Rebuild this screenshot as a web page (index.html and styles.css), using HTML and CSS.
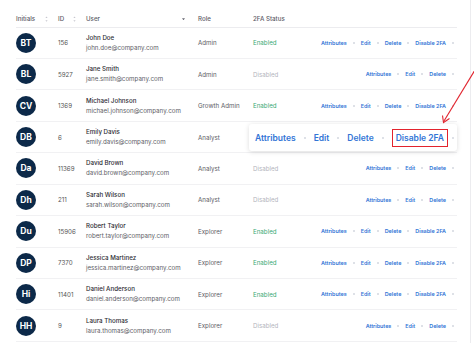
FILE: index.html
```html
<!DOCTYPE html>
<html lang="en">
<head>
	<meta charset="utf-8">
	<title>Users</title>
	<link rel="stylesheet" href="styles.css">
</head>
<body>
	<div class="page">
		<div class="userTable">
			<div class="row head">
				<div class="hcell">Initials <svg class="sortIcon" viewBox="0 0 4 8"><path d="M2 0.5 L3.5 2.5 H0.5Z M2 7.5 L3.5 5.5 H0.5Z"/></svg></div>
				<div class="hcell">ID <svg class="sortIcon" viewBox="0 0 4 8"><path d="M2 0.5 L3.5 2.5 H0.5Z M2 7.5 L3.5 5.5 H0.5Z"/></svg></div>
				<div class="hcell">User <svg class="sortDown" viewBox="0 0 4 3"><path d="M0 0 H4 L2 3Z"/></svg></div>
				<div class="hcell">Role</div>
				<div class="hcell">2FA Status</div>
				<div class="hcell"></div>
			</div>

			<div class="row">
				<div><span class="avatar">BT</span></div>
				<div class="id">156</div>
				<div class="user"><div class="name">John Doe</div><div class="mail">john.doe@company.com</div></div>
				<div class="role">Admin</div>
				<div class="status on">Enabled</div>
				<div class="actions"><a>Attributes</a><i></i><a>Edit</a><i></i><a>Delete</a><i></i><a>Disable 2FA</a><i></i></div>
			</div>
			<div class="row">
				<div><span class="avatar">BL</span></div>
				<div class="id">5927</div>
				<div class="user"><div class="name">Jane Smith</div><div class="mail">jane.smith@company.com</div></div>
				<div class="role">Admin</div>
				<div class="status off">Disabled</div>
				<div class="actions"><a>Attributes</a><i></i><a>Edit</a><i></i><a>Delete</a><i></i></div>
			</div>
			<div class="row">
				<div><span class="avatar">CV</span></div>
				<div class="id">1369</div>
				<div class="user"><div class="name">Michael Johnson</div><div class="mail">michael.johnson@company.com</div></div>
				<div class="role">Growth Admin</div>
				<div class="status on">Enabled</div>
				<div class="actions"><a>Attributes</a><i></i><a>Edit</a><i></i><a>Delete</a><i></i><a>Disable 2FA</a><i></i></div>
			</div>
			<div class="row">
				<div><span class="avatar">DB</span></div>
				<div class="id">6</div>
				<div class="user"><div class="name">Emily Davis</div><div class="mail">emily.davis@company.com</div></div>
				<div class="role">Analyst</div>
				<div class="status"></div>
				<div class="actions"></div>
			</div>
			<div class="row">
				<div><span class="avatar">Da</span></div>
				<div class="id">11369</div>
				<div class="user"><div class="name">David Brown</div><div class="mail">david.brown@company.com</div></div>
				<div class="role">Analyst</div>
				<div class="status off">Disabled</div>
				<div class="actions"><a>Attributes</a><i></i><a>Edit</a><i></i><a>Delete</a><i></i></div>
			</div>
			<div class="row">
				<div><span class="avatar">Dh</span></div>
				<div class="id">211</div>
				<div class="user"><div class="name">Sarah Wilson</div><div class="mail">sarah.wilson@company.com</div></div>
				<div class="role">Analyst</div>
				<div class="status off">Disabled</div>
				<div class="actions"><a>Attributes</a><i></i><a>Edit</a><i></i><a>Delete</a><i></i></div>
			</div>
			<div class="row">
				<div><span class="avatar">Du</span></div>
				<div class="id">15906</div>
				<div class="user"><div class="name">Robert Taylor</div><div class="mail">robert.taylor@company.com</div></div>
				<div class="role">Explorer</div>
				<div class="status on">Enabled</div>
				<div class="actions"><a>Attributes</a><i></i><a>Edit</a><i></i><a>Delete</a><i></i><a>Disable 2FA</a><i></i></div>
			</div>
			<div class="row">
				<div><span class="avatar">DP</span></div>
				<div class="id">7370</div>
				<div class="user"><div class="name">Jessica Martinez</div><div class="mail">jessica.martinez@company.com</div></div>
				<div class="role">Explorer</div>
				<div class="status on">Enabled</div>
				<div class="actions"><a>Attributes</a><i></i><a>Edit</a><i></i><a>Delete</a><i></i><a>Disable 2FA</a><i></i></div>
			</div>
			<div class="row">
				<div><span class="avatar">Hi</span></div>
				<div class="id">11401</div>
				<div class="user"><div class="name">Daniel Anderson</div><div class="mail">daniel.anderson@company.com</div></div>
				<div class="role">Explorer</div>
				<div class="status on">Enabled</div>
				<div class="actions"><a>Attributes</a><i></i><a>Edit</a><i></i><a>Delete</a><i></i><a>Disable 2FA</a><i></i></div>
			</div>
			<div class="row">
				<div><span class="avatar">HH</span></div>
				<div class="id">9</div>
				<div class="user"><div class="name">Laura Thomas</div><div class="mail">laura.thomas@company.com</div></div>
				<div class="role">Explorer</div>
				<div class="status off">Disabled</div>
				<div class="actions"><a>Attributes</a><i></i><a>Edit</a><i></i><a>Delete</a><i></i></div>
			</div>

			<!-- zoomed callout of the row actions -->
			<div class="callout">
				<a>Attributes</a><i></i><a>Edit</a><i></i><a>Delete</a><i></i><a class="marked">Disable 2FA</a><i></i>
			</div>
		</div>
		<div class="edge"></div>
		<svg class="arrow" viewBox="0 0 474 343" width="474" height="343">
			<path d="M475 70 L444 121" />
			<path d="M442.5 115.5 L443.5 122.5 L449.5 118.5" />
		</svg>
	</div>
</body>
</html>
```

FILE: styles.css
```css
*, *:after, *:before {
	box-sizing: border-box;
}
html, body {
	margin: 0;
	background: #fff;
	font-family: Inter, "Noto Sans", sans-serif;
	color: #333;
}
.page {
	position: relative;
	width: 474px;
	height: 343px;
	overflow: hidden;
}
.userTable {
	position: relative;
	width: 441px;
	margin-left: 16px;
	padding-top: 11px;
}
.row {
	display: grid;
	grid-template-columns: 42px 28px 112px 55px 50px 1fr;
	align-items: center;
	height: 31.45px;
	border-bottom: 1px solid #f1f1f3;
	font-size: 6.2px;
	white-space: nowrap;
}
.row.head {
	height: 16.5px;
	border-bottom: 1px solid #ececef;
	color: #5b5b66;
	font-weight: 500;
}
.hcell {
	display: flex;
	align-items: center;
	justify-content: space-between;
	padding-right: 10px;
}
.sortIcon {
	width: 3px;
	height: 6px;
	fill: #c7c7cf;
}
.sortDown {
	width: 3px;
	height: 2.5px;
	fill: #6a6a74;
	margin-right: 3px;
}
.avatar {
	display: flex;
	align-items: center;
	justify-content: center;
	width: 20px;
	height: 20px;
	border-radius: 50%;
	background: #0c2949;
	color: #fff;
	font-size: 8.5px;
	font-weight: 700;
}
.id {
	color: #555;
}
.name {
	color: #2d2d33;
	font-weight: 500;
	line-height: 10px;
}
.mail {
	color: #5c5c66;
	line-height: 10px;
}
.role {
	color: #5c5c66;
}
.status.on {
	color: #3aa874;
}
.status.off {
	color: #b4b4bc;
}
.actions {
	display: flex;
	justify-content: flex-end;
	align-items: center;
	padding-right: 3px;
	font-size: 5.4px;
	font-weight: 600;
}
.actions a, .callout a {
	color: #3275d6;
}
.actions i, .callout i {
	width: 2px;
	height: 2px;
	border-radius: 50%;
	background: #d3d7df;
	margin: 0 6px;
}
.actions i:last-child {
	margin-right: 0;
}
.callout {
	position: absolute;
	left: 233px;
	top: 124px;
	width: 208px;
	height: 27px;
	display: flex;
	align-items: center;
	justify-content: flex-end;
	padding-right: 3px;
	background: #fff;
	border-radius: 3px;
	box-shadow: 0 1px 5px rgba(0, 0, 0, 0.14);
	font-size: 8.5px;
	font-weight: 600;
	white-space: nowrap;
}
.callout i {
	margin: 0 8px;
}
.callout i:last-child {
	margin: 0 0 0 4px;
}
.callout .marked {
	padding: 3px 3px;
	border: 1.5px solid #e3232d;
}
.edge {
	position: absolute;
	left: 470px;
	top: 0;
	width: 1px;
	height: 343px;
	background: #ececef;
}
.arrow {
	position: absolute;
	left: 0;
	top: 0;
	fill: none;
	stroke: #e1252f;
	stroke-width: 1.1;
}
```
